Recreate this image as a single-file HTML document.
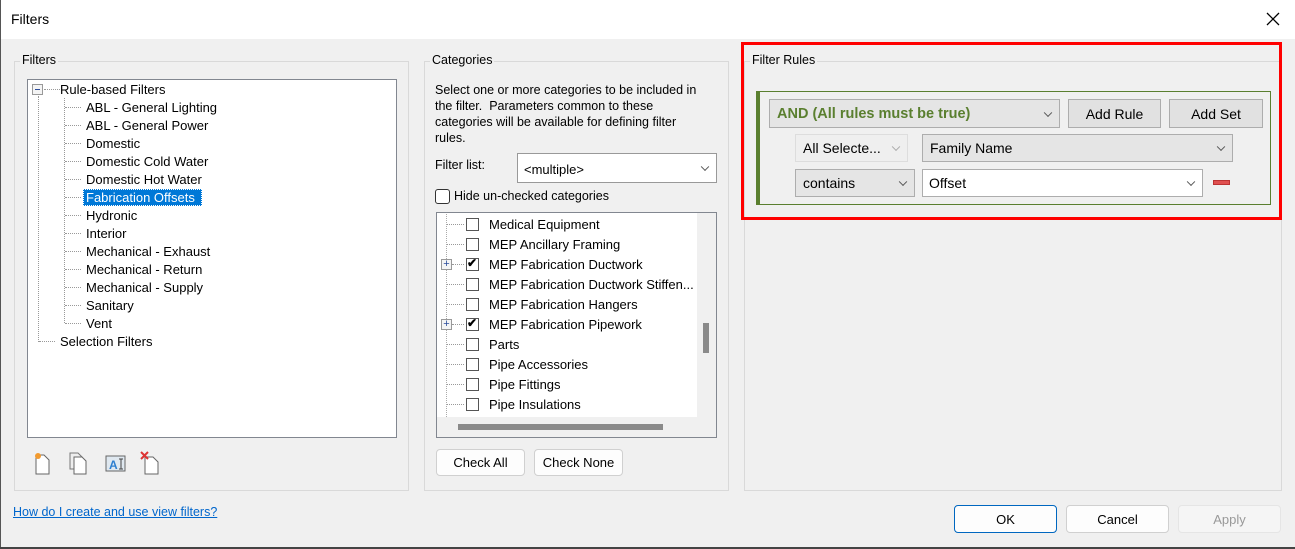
<!DOCTYPE html><html><head><style>
*{box-sizing:border-box;margin:0;padding:0}
body{width:1295px;height:549px;background:#f0f0f0;font-family:"Liberation Sans",sans-serif;font-size:13px;color:#000;position:relative;overflow:hidden}
.a{position:absolute}
.grp{position:absolute;border:1px solid #d9d9d9}
.lbl{position:absolute;background:#f0f0f0;padding:0 2px;font-size:12.5px}
.t{position:absolute;white-space:nowrap;font-size:13px}
.dd{position:absolute;border:1px solid #adadad;background:#e5e5e5;font-size:14px;padding-left:7px;display:flex;align-items:center}
.chev{position:absolute;right:8px;top:50%;width:6px;height:6px;border-right:1px solid #555;border-bottom:1px solid #555;transform:translateY(-70%) rotate(45deg)}
.btn{position:absolute;border:1px solid #adadad;background:#e1e1e1;font-size:14px;display:flex;align-items:center;justify-content:center}
.wb{position:absolute;border:1px solid #d0d0d0;background:#fdfdfd;border-radius:4px;font-size:13px;display:flex;align-items:center;justify-content:center}
.cb{position:absolute;width:13px;height:13px;border:1px solid #555;background:#fff}
.dot{position:absolute;border-top:1px dotted #999;width:16px}
</style></head><body>
<div class="a" style="left:0;top:0;width:1295px;height:39px;background:#fff"></div>
<div class="t" style="left:11px;top:11px;font-size:14px">Filters</div>
<svg class="a" style="left:1266px;top:12px" width="14" height="14"><path d="M1 1L13 13M13 1L1 13" stroke="#000" stroke-width="1.3"/></svg>
<div class="a" style="left:0;top:0;width:1px;height:549px;background:#555"></div>
<div class="a" style="left:0;top:547px;width:1295px;height:2px;background:#444"></div>

<!-- Filters group -->
<div class="grp" style="left:14px;top:61px;width:395px;height:430px"></div>
<div class="lbl" style="left:20px;top:53px">Filters</div>
<div class="a" style="left:27px;top:79px;width:370px;height:359px;background:#fff;border:1px solid #828790"></div>
<div class="a" style="left:32px;top:84px;width:11px;height:11px;border:1px solid #999;background:#f4f4f4"><div class="a" style="left:2px;top:4px;width:5px;height:1px;background:#2b4c9a"></div></div>
<div class="a" style="left:38px;top:96px;height:246px;border-left:1px dotted #999"></div>
<div class="a" style="left:64px;top:98px;height:225px;border-left:1px dotted #999"></div>
<div class="dot" style="left:44px;top:89px"></div>
<div class="dot" style="left:39px;top:341px"></div>
<div class="t" style="left:60px;top:82px">Rule-based Filters</div>
<div class="t" style="left:60px;top:334px">Selection Filters</div>
<div id="tree"></div>
<div class="a" style="left:83px;top:189px;width:119px;height:17px;background:#0078d7;outline:1px dotted #fff;outline-offset:-1px"></div>

<!-- icons -->
<svg class="a" style="left:30px;top:450px" width="140" height="26">
<path d="M6 5h8l5 5v14H6z" fill="#fff" stroke="#666"/><circle cx="8" cy="6" r="3" fill="#f29a2e"/>
<path d="M40 3h8l4 4v12H40z" fill="#eee" stroke="#777"/><path d="M44 7h8l4 4v13H44z" fill="#fff" stroke="#666"/>
<rect x="76" y="6" width="19" height="15" fill="#dfe8f0" stroke="#666"/><text x="79" y="19" font-size="12" font-weight="bold" fill="#2d7fd0" font-family="Liberation Sans">A</text><path d="M91 9v10M89 9h4M89 19h4" stroke="#444"/>
<path d="M115 7h8l5 5v12h-13z" fill="#fff" stroke="#666"/><path d="M111 2l7 7M118 2l-7 7" stroke="#d33" stroke-width="2"/>
</svg>

<!-- Categories -->
<div class="grp" style="left:424px;top:61px;width:305px;height:430px"></div>
<div class="lbl" style="left:430px;top:53px">Categories</div>
<div class="t" style="left:435px;top:82px;font-size:12.5px;line-height:16px;white-space:normal;width:272px">Select one or more categories to be included in the filter.&nbsp; Parameters common to these categories will be available for defining filter rules.</div>
<div class="t" style="left:435px;top:158px;font-size:12.5px">Filter list:</div>
<div class="a" style="left:517px;top:153px;width:200px;height:30px;background:#fff;border:1px solid #999;font-size:13px;padding:8px 6px">&lt;multiple&gt;<div class="chev"></div></div>
<div class="a" style="left:435px;top:189px;width:15px;height:15px;border:1px solid #333;border-radius:3px;background:#fff"></div>
<div class="t" style="left:454px;top:189px;font-size:12.5px">Hide un-checked categories</div>
<div class="a" style="left:436px;top:212px;width:281px;height:226px;background:#fff;border:1px solid #828790"></div>
<div class="a" style="left:697px;top:213px;width:19px;height:224px;background:#f0f0f0"></div>
<div class="a" style="left:437px;top:417px;width:260px;height:20px;background:#f0f0f0"></div>
<div class="a" style="left:703px;top:323px;width:6px;height:30px;background:#8a8a8a"></div>
<div class="a" style="left:458px;top:424px;width:205px;height:6px;background:#8a8a8a"></div>
<div id="cats"></div>
<div class="wb" style="left:436px;top:449px;width:89px;height:27px">Check All</div>
<div class="wb" style="left:534px;top:449px;width:89px;height:27px">Check None</div>

<!-- Filter Rules -->
<div class="grp" style="left:744px;top:61px;width:538px;height:430px"></div>
<div class="lbl" style="left:750px;top:53px">Filter Rules</div>
<div class="a" style="left:741px;top:42px;width:541px;height:178px;border:3px solid #f00"></div>
<div class="a" style="left:756px;top:91px;width:515px;height:114px;border:1px solid #5a7f2f;border-left:4px solid #5a7f2f"></div>
<div class="dd" style="left:769px;top:99px;width:291px;height:29px;color:#5a7f2f;font-weight:bold;font-size:14.5px">AND (All rules must be true)<div class="chev"></div></div>
<div class="btn" style="left:1068px;top:99px;width:93px;height:29px">Add Rule</div>
<div class="btn" style="left:1169px;top:99px;width:94px;height:29px">Add Set</div>
<div class="dd" style="left:795px;top:134px;width:113px;height:28px;background:#efefef;border-color:#ddd">All Selecte...<div class="chev" style="border-color:#aaa"></div></div>
<div class="dd" style="left:922px;top:134px;width:311px;height:28px">Family Name<div class="chev"></div></div>
<div class="dd" style="left:795px;top:169px;width:120px;height:28px">contains<div class="chev"></div></div>
<div class="dd" style="left:922px;top:169px;width:281px;height:28px;background:#fff;padding-left:6px">Offset<div class="chev"></div></div>
<div class="a" style="left:1213px;top:180px;width:17px;height:5px;background:#e05050;border:1px solid #b33"></div>

<!-- bottom -->
<div class="t" style="left:13px;top:505px;color:#0066cc;text-decoration:underline;font-size:12.5px">How do I create and use view filters?</div>
<div class="wb" style="left:954px;top:505px;width:103px;height:28px;border:1px solid #0067c0">OK</div>
<div class="wb" style="left:1066px;top:505px;width:103px;height:28px">Cancel</div>
<div class="wb" style="left:1178px;top:505px;width:103px;height:28px;color:#999;background:#f5f5f5;border-color:#e5e5e5">Apply</div>

<script>
var f=["ABL - General Lighting","ABL - General Power","Domestic","Domestic Cold Water","Domestic Hot Water","Fabrication Offsets","Hydronic","Interior","Mechanical - Exhaust","Mechanical - Return","Mechanical - Supply","Sanitary","Vent"],h="";
f.forEach(function(s,i){var y=100+i*18;h+='<div class="dot" style="left:65px;top:'+(y+7)+'px"></div><div class="t" style="left:86px;top:'+y+'px;'+(i==5?'color:#fff;z-index:2':'')+'">'+s+'</div>';});
document.getElementById('tree').innerHTML=h;
var c=["Medical Equipment","MEP Ancillary Framing","MEP Fabrication Ductwork","MEP Fabrication Ductwork Stiffen...","MEP Fabrication Hangers","MEP Fabrication Pipework","Parts","Pipe Accessories","Pipe Fittings","Pipe Insulations"];h='<div class="a" style="left:446px;top:214px;height:203px;border-left:1px dotted #aaa"></div>';
c.forEach(function(s,i){var y=217+i*20,k=(i==2||i==5);h+='<div class="dot" style="left:'+(k?452:447)+'px;top:'+(y+7)+'px;width:'+(k?12:17)+'px"></div><div class="cb" style="left:466px;top:'+(y+1)+'px">'+(k?'<span style="position:absolute;left:0;top:-3px;font-size:12px;font-weight:bold">✔</span>':'')+'</div><div class="t" style="left:489px;top:'+y+'px">'+s+'</div>';
if(k)h+='<div class="a" style="left:441px;top:'+(y+2)+'px;width:11px;height:11px;border:1px solid #999;background:#f4f4f4;font-size:11px;line-height:9px;text-align:center;color:#2b4c9a">+</div>';});
document.getElementById('cats').innerHTML=h;
</script>
</body></html>
